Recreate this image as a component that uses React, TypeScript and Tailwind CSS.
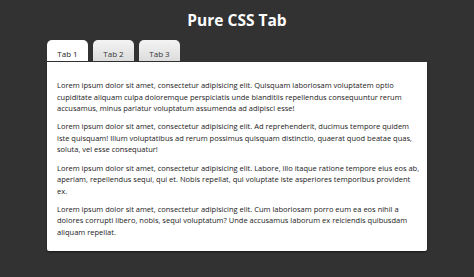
import React, { useState } from 'react';

const paragraphs = [
  'Lorem ipsum dolor sit amet, consectetur adipisicing elit. Quisquam laboriosam voluptatem optio cupiditate aliquam culpa doloremque perspiciatis unde blanditiis repellendus consequuntur rerum accusamus, minus pariatur voluptatum assumenda ad adipisci esse!',
  'Lorem ipsum dolor sit amet, consectetur adipisicing elit. Ad reprehenderit, ducimus tempore quidem iste quisquam! Illum voluptatibus ad rerum possimus quisquam distinctio, quaerat quod beatae quas, soluta, vel esse consequatur!',
  'Lorem ipsum dolor sit amet, consectetur adipisicing elit. Labore, illo itaque ratione tempore eius eos ab, aperiam, repellendus sequi, qui et. Nobis repellat, qui voluptate iste asperiores temporibus provident ex.',
  'Lorem ipsum dolor sit amet, consectetur adipisicing elit. Cum laboriosam porro eum ea eos nihil a dolores corrupti libero, nobis, sequi voluptatum? Unde accusamus laborum ex reiciendis quibusdam aliquam repellat.',
];

const tabs = ['Tab 1', 'Tab 2', 'Tab 3'];

export default function App() {
  const [active, setActive] = useState(0);

  return (
    <div className="h-[277px] w-full bg-[#323232] font-['Open_Sans',sans-serif] overflow-hidden">
      <h1 className="pt-[8px] text-center text-[15.5px] font-bold leading-[24px] text-white">
        Pure CSS Tab
      </h1>
      <div className="mx-[47px] mt-[8px] w-[380px]">
        <div className="flex gap-[5px]">
          {tabs.map((t, i) => (
            <button
              key={t}
              onClick={() => setActive(i)}
              className={
                i === active
                  ? 'h-[21px] w-[41px] rounded-t-[5px] bg-white pt-[6px] text-[8px] leading-[14px] text-[#222]'
                  : 'h-[21px] w-[41px] rounded-t-[5px] bg-gradient-to-b from-[#f4f4f4] to-[#dcdcdc] pt-[6px] text-[8px] leading-[14px] text-[#333]'
              }
            >
              {t}
            </button>
          ))}
        </div>
        <div className="mt-px h-[189px] rounded-b-[2px] bg-white pl-[10px] pr-[7px] pt-[18px] shadow-[0_1px_2px_rgba(0,0,0,0.5)]">
          {paragraphs.map((p, i) => (
            <p key={i} className="mb-[6.5px] text-[7.5px] leading-[11.6px] text-[#222]">
              {p}
            </p>
          ))}
        </div>
      </div>
    </div>
  );
}
